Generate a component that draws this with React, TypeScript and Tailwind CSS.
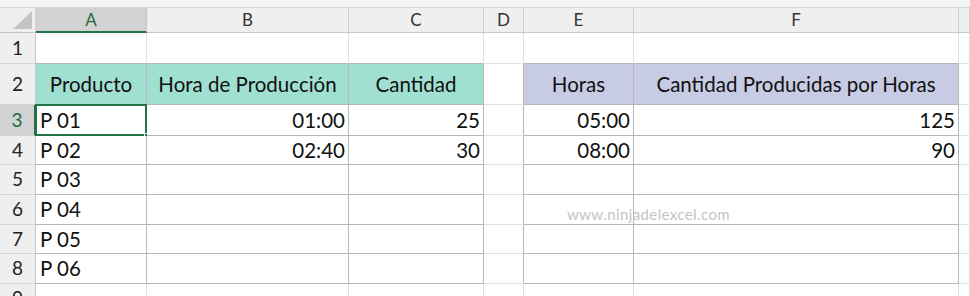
import React from "react";

// Small spreadsheet view: two bordered tables (production times and units per hour)
// with A3 as the active cell.

const COLS = ["A", "B", "C", "D", "E", "F", ""];
const ROW_H = ["h-[31px]", "h-[41px]", "h-[31px]", "h-[29px]", "h-[30px]", "h-[30px]", "h-[29px]", "h-[30px]", "h-[30px]"];
const COL_W = ["w-[111px]", "w-[202px]", "w-[135px]", "w-[40px]", "w-[110px]", "w-[325px]", "w-[11px]"];

type Cell = { text: string; align?: "left" | "right" | "center" };

// rows 1..9, columns A..G
const data: Record<string, Cell> = {
  "2-0": { text: "Producto", align: "center" },
  "2-1": { text: "Hora de Producción", align: "center" },
  "2-2": { text: "Cantidad", align: "center" },
  "2-4": { text: "Horas", align: "center" },
  "2-5": { text: "Cantidad Producidas por Horas", align: "center" },
  "3-0": { text: "P 01" },
  "3-1": { text: "01:00", align: "right" },
  "3-2": { text: "25", align: "right" },
  "3-4": { text: "05:00", align: "right" },
  "3-5": { text: "125", align: "right" },
  "4-0": { text: "P 02" },
  "4-1": { text: "02:40", align: "right" },
  "4-2": { text: "30", align: "right" },
  "4-4": { text: "08:00", align: "right" },
  "4-5": { text: "90", align: "right" },
  "5-0": { text: "P 03" },
  "6-0": { text: "P 04" },
  "7-0": { text: "P 05" },
  "8-0": { text: "P 06" },
};

function inTable(row: number, col: number) {
  return row >= 2 && row <= 8 && (col <= 2 || col === 4 || col === 5);
}

function fill(row: number, col: number) {
  if (row !== 2) return "bg-white";
  if (col <= 2) return "bg-[#a0e0d0]";
  if (col === 4 || col === 5) return "bg-[#c8cbe4]";
  return "bg-white";
}

function GridCell({ row, col }: { row: number; col: number }) {
  const cell = data[`${row}-${col}`];
  const right = inTable(row, col) || inTable(row, col + 1) ? "border-r-[#b8b8b8]" : "border-r-[#e1e1e1]";
  const bottom = inTable(row, col) || inTable(row + 1, col) ? "border-b-[#b8b8b8]" : "border-b-[#e1e1e1]";
  const align =
    cell?.align === "right" ? "justify-end pr-[3px]" : cell?.align === "center" ? "justify-center" : "justify-start pl-[4px]";
  const active = row === 3 && col === 0;
  return (
    <div
      className={`relative flex shrink-0 items-center border-r border-b ${right} ${bottom} ${fill(row, col)} ${COL_W[col]} ${align}`}
    >
      {cell && <span className="whitespace-nowrap leading-none text-[#111]">{cell.text}</span>}
      {active && (
        <>
          <div className="absolute -top-[1px] -left-[1px] -right-[1px] -bottom-[1px] border-2 border-[#217346]" />
          <div className="absolute -right-[4px] -bottom-[4px] h-[6px] w-[6px] border border-white bg-[#217346]" />
        </>
      )}
    </div>
  );
}

export default function App() {
  return (
    <div className="relative h-[296px] w-[970px] overflow-hidden bg-white text-[20.5px]" style={{ fontFamily: "Lato, 'Noto Sans', sans-serif" }}>
      <div className="h-[8px] border-b border-[#d6d6d6] bg-[#f3f3f3]" />

      {/* column headers */}
      <div className="flex h-[25px] border-b border-[#c6c6c6] bg-[#efefef] text-[17px] text-[#333]">
        <div className="relative flex w-[36px] shrink-0 items-end justify-end border-r border-[#d0d0d0] pr-[3px] pb-[3px]">
          <svg width="19" height="18" viewBox="0 0 19 18">
            <polygon points="19,0 19,18 0,18" fill="#c4c4c4" />
          </svg>
        </div>
        {COLS.map((c, i) =>
          i === 0 ? (
            <div
              key={i}
              className={`-mb-[1px] flex shrink-0 items-center justify-center border-r border-b-2 border-r-[#c6c6c6] border-b-[#217346] bg-[#d2d2d2] text-[#1e6b40] ${COL_W[i]}`}
            >
              {c}
            </div>
          ) : (
            <div key={i} className={`flex shrink-0 items-center justify-center border-r border-[#d0d0d0] ${COL_W[i]}`}>
              {c}
            </div>
          )
        )}
      </div>

      {[1, 2, 3, 4, 5, 6, 7, 8, 9].map((r) => (
        <div key={r} className={`flex ${ROW_H[r - 1]}`}>
          {r === 3 ? (
            <div className="flex w-[36px] shrink-0 items-center justify-center border-r-2 border-b border-r-[#217346] border-b-[#d0d0d0] bg-[#d2d2d2] text-[19px] text-[#1e6b40]">
              {r}
            </div>
          ) : (
            <div className="flex w-[36px] shrink-0 items-center justify-center border-r border-b border-r-[#c6c6c6] border-b-[#d6d6d6] bg-[#efefef] text-[19px] text-[#222]">
              {r}
            </div>
          )}
          {COLS.map((_, c) => (
            <GridCell key={c} row={r} col={c} />
          ))}
        </div>
      ))}

      <span className="absolute left-[567px] top-[203px] text-[15px] tracking-[0.4px] text-[#c4c4c4]">www.ninjadelexcel.com</span>
    </div>
  );
}
